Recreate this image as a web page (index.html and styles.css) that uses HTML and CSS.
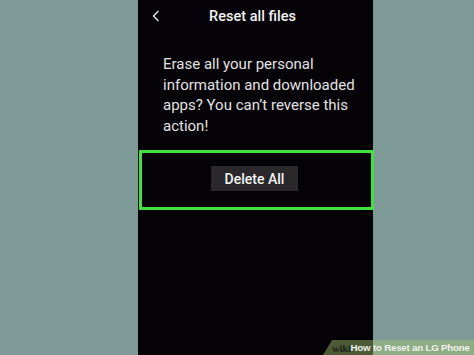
FILE: index.html
```html
<!DOCTYPE html>
<html>
<head>
<meta charset="utf-8">
<link rel="stylesheet" href="styles.css">
</head>
<body>
<div class="page">
  <div class="gutter"></div>
  <div class="phone">
    <div class="header">
      <span class="back"><svg width="8" height="12" viewBox="0 0 8 12"><path d="M6.5 1 L1.5 6 L6.5 11" fill="none" stroke="#e8e8e8" stroke-width="1.4"/></svg></span>
      <span class="title">Reset all files</span>
    </div>
    <p class="msg">Erase all your personal information and downloaded apps? You can’t reverse this action!</p>
    <div class="highlight">
      <span class="btn">Delete All</span>
    </div>
  </div>
  <div class="gutter-right"></div>
</div>
<div class="banner"><span class="wiki">wiki</span><span class="how">How to Reset an LG Phone</span></div>
</body>
</html>
```
FILE: styles.css
```css
html, body {
  margin: 0;
  padding: 0;
  width: 474px;
  height: 355px;
  overflow: hidden;
  background: #7d9a98;
  font-family: Roboto, "Liberation Sans", sans-serif;
}
.page {
  display: flex;
  height: 355px;
}
.gutter {
  width: 138px;
  flex: none;
}
.phone {
  width: 235px;
  flex: none;
  background: #050307;
  display: flex;
  flex-direction: column;
}
.gutter-right {
  flex: 1;
}
.header {
  position: relative;
  height: 32px;
  display: flex;
  align-items: center;
  justify-content: center;
}
.back {
  position: absolute;
  left: 14px;
  top: 10px;
  display: flex;
}
.title {
  color: #f2f2f2;
  font-size: 14.5px;
  font-weight: 500;
  margin-right: 6px;
}
.msg {
  margin: 22px 10px 0 25px;
  color: #e2e2e2;
  font-size: 15px;
  line-height: 20.5px;
  font-weight: 400;
}
.highlight {
  margin: 14px 0 0 1px;
  width: 235px;
  height: 60px;
  box-sizing: border-box;
  border: 3px solid #3ee23e;
  display: flex;
  align-items: center;
  justify-content: center;
}
.btn {
  background: #2a282a;
  color: #f4f4f4;
  font-size: 14px;
  font-weight: 500;
  width: 87px;
  height: 25px;
  display: flex;
  align-items: center;
  justify-content: center;
  margin-right: 4px;
  margin-bottom: 3px;
}
.banner {
  position: absolute;
  left: 323px;
  top: 340px;
  width: 151px;
  height: 15px;
  background: rgba(164, 194, 114, 0.46);
  clip-path: polygon(9px 0, 100% 0, 100% 100%, 0 100%);
  display: flex;
  align-items: center;
  padding-left: 9px;
  font-size: 9.7px;
  font-family: "Liberation Sans", Arial, sans-serif;
  font-weight: bold;
  white-space: nowrap;
}
.wiki {
  color: #1e2616;
  font-family: "Liberation Serif", serif;
  font-size: 11px;
  letter-spacing: -0.4px;
}
.how {
  color: #eef2ea;
  letter-spacing: -0.2px;
}
```
